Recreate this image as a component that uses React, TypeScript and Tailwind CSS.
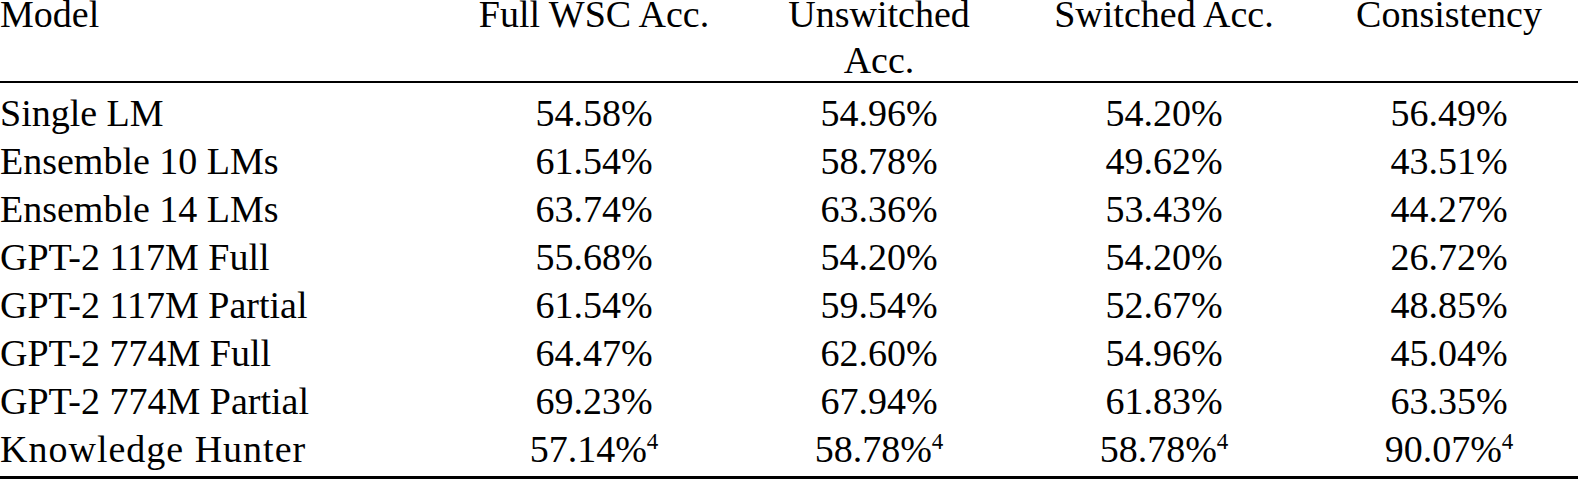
const rows = [
  { model: "Single LM", values: ["54.58%", "54.96%", "54.20%", "56.49%"] },
  { model: "Ensemble 10 LMs", values: ["61.54%", "58.78%", "49.62%", "43.51%"] },
  { model: "Ensemble 14 LMs", values: ["63.74%", "63.36%", "53.43%", "44.27%"] },
  { model: "GPT-2 117M Full", values: ["55.68%", "54.20%", "54.20%", "26.72%"] },
  { model: "GPT-2 117M Partial", values: ["61.54%", "59.54%", "52.67%", "48.85%"] },
  { model: "GPT-2 774M Full", values: ["64.47%", "62.60%", "54.96%", "45.04%"] },
  { model: "GPT-2 774M Partial", values: ["69.23%", "67.94%", "61.83%", "63.35%"] },
  {
    model: "Knowledge Hunter",
    values: ["57.14%", "58.78%", "58.78%", "90.07%"],
    note: "4",
  },
];

const cols = "grid grid-cols-[452px_284px_286px_284px_272px]";

export default function App() {
  return (
    <div className="h-[482px] w-[1578px] overflow-hidden bg-white font-['Liberation_Serif',serif] text-[38px] text-black">
      <div className={`${cols} mt-[-9px] h-[90px] leading-[46px]`}>
        <div>Model</div>
        <div className="text-center">Full WSC Acc.</div>
        <div className="text-center">
          Unswitched
          <br />
          Acc.
        </div>
        <div className="text-center">Switched Acc.</div>
        <div className="pl-[14px] text-center">Consistency</div>
      </div>
      <div className="h-[2px] bg-black" />
      <div className="pt-[6px]">
        {rows.map((row, index) => (
          <div key={index} className={`${cols} h-[48px] leading-[48px]`}>
            <div className={`whitespace-nowrap ${row.note ? "tracking-[1px]" : ""}`}>{row.model}</div>
            {row.values.map((value, i) => (
              <div key={i} className={`whitespace-nowrap text-center ${i === 3 ? "pl-[14px]" : ""}`}>
                {value}
                {row.note && (
                  <span className="relative -top-[13px] align-baseline text-[23px] leading-none">
                    {row.note}
                  </span>
                )}
              </div>
            ))}
          </div>
        ))}
      </div>
      <div className="mt-[3px] h-[3px] bg-black" />
    </div>
  );
}
